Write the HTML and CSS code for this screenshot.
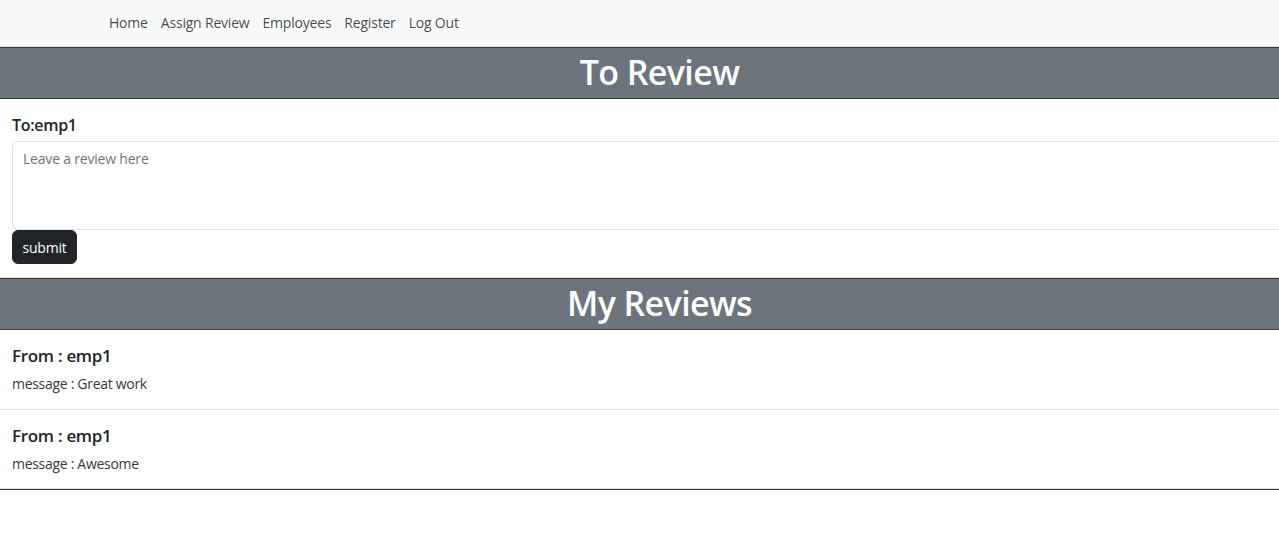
FILE: index.html
```html
<!DOCTYPE html>
<html lang="en">
<head>
<meta charset="utf-8">
<title>Reviews</title>
<link rel="stylesheet" href="styles.css">
</head>
<body>
<nav class="navbar">
  <ul class="nav-links">
    <li><a href="#">Home</a></li>
    <li><a href="#">Assign Review</a></li>
    <li><a href="#">Employees</a></li>
    <li><a href="#">Register</a></li>
    <li><a href="#">Log Out</a></li>
  </ul>
</nav>

<div class="section-bar"><h1>To Review</h1></div>

<form class="review-form">
  <label class="to-label" for="review">To:emp1</label>
  <textarea id="review" class="review-input" placeholder="Leave a review here"></textarea>
  <button type="button" class="submit-btn">submit</button>
</form>

<div class="section-bar"><h1>My Reviews</h1></div>

<div class="review-list">
  <div class="review-item">
    <h5 class="review-from">From : emp1</h5>
    <p class="review-msg">message : Great work</p>
  </div>
  <div class="review-item">
    <h5 class="review-from">From : emp1</h5>
    <p class="review-msg">message : Awesome</p>
  </div>
</div>
</body>
</html>
```

FILE: styles.css
```css
html, body {
  margin: 0;
  padding: 0;
  overflow-x: hidden;
}
body {
  font-family: "Open Sans", "Noto Sans", sans-serif;
  color: #212529;
  background: #fff;
}

.navbar {
  box-sizing: border-box;
  height: 47px;
  padding-bottom: 2px;
  background: #f8f9fa;
  border-bottom: 1px solid #dee2e6;
  display: flex;
  align-items: center;
  padding-left: 101px;
}
.nav-links {
  list-style: none;
  margin: 0;
  padding: 0;
  display: flex;
}
.nav-links a {
  display: block;
  padding: 0 6px 0 7px;
  font-size: 14px;
  line-height: 21px;
  letter-spacing: -0.2px;
  color: rgba(0, 0, 0, 0.72);
  text-decoration: none;
}
.nav-links li:first-child a { padding-left: 8px; }

.section-bar {
  box-sizing: border-box;
  background: #6c757d;
  border-top: 1px solid #343a40;
  border-bottom: 1px solid #343a40;
  height: 52px;
  padding: 0 0 3px 40px;
  display: flex;
  align-items: center;
  justify-content: center;
}
.section-bar h1 {
  margin: 0;
  color: #fff;
  font-size: 34px;
  font-weight: 600;
  line-height: 44px;
  letter-spacing: -0.6px;
}

.review-form {
  padding: 14px 0 13px 12px;
  border-bottom: 1px solid #dee2e6;
  display: flex;
  flex-direction: column;
  align-items: flex-start;
}
.to-label {
  font-size: 16px;
  font-weight: 600;
  line-height: 24px;
  margin-bottom: 4px;
  letter-spacing: -0.3px;
}
.review-input {
  box-sizing: border-box;
  width: calc(100% + 20px);
  height: 89px;
  margin: 0;
  border: 1px solid #dee2e6;
  border-radius: 6px;
  padding: 6px 10px;
  font-family: "Open Sans", "Noto Sans", sans-serif;
  font-size: 14px;
  line-height: 21px;
  color: #212529;
  resize: none;
  letter-spacing: -0.2px;
}
.review-input::placeholder {
  color: #6c757d;
}
.submit-btn {
  box-sizing: border-box;
  height: 34px;
  width: 65px;
  margin: 0;
  border: 1px solid #212529;
  border-radius: 6px;
  background: #212529;
  color: #fff;
  font-family: "Open Sans", "Noto Sans", sans-serif;
  font-size: 14px;
  line-height: 21px;
  padding: 0;
  letter-spacing: -0.2px;
}

.review-list {
  border-bottom: 1px solid #343a40;
}
.review-item {
  padding: 14px 12px 15px;
  border-bottom: 1px solid #dee2e6;
}
.review-item:last-child {
  padding-bottom: 14px;
}
.review-from {
  margin: 0 0 5px;
  font-size: 17px;
  font-weight: 600;
  line-height: 24px;
  letter-spacing: -0.3px;
}
.review-msg {
  margin: 0;
  font-size: 14px;
  line-height: 21px;
  color: #343a40;
  letter-spacing: -0.3px;
}
```
